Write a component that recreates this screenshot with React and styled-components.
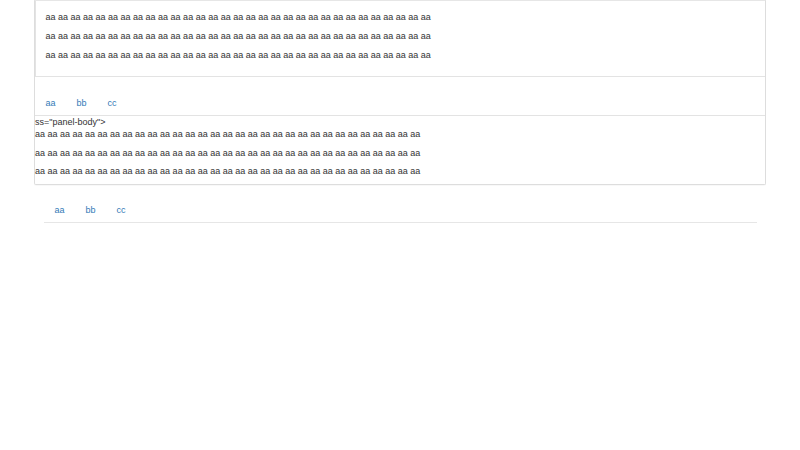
import styled, { createGlobalStyle } from "styled-components";

const GlobalStyle = createGlobalStyle`
  html, body {
    margin: 0;
    padding: 0;
    background: #fff;
  }
  body {
    font-family: "Liberation Sans", Arial, sans-serif;
    font-size: 9px;
    line-height: 12.7px;
    color: #333;
  }
`;

const Container = styled.div`
  padding: 0 34px;
`;

const Panel = styled.div`
  border: 1px solid #ddd;
  border-top-color: #e6e6e6;
  border-radius: 0 0 2px 2px;
  margin-bottom: 12.5px;
  box-shadow: 0 1px 1px rgba(0, 0, 0, 0.03);
`;

const PanelBody = styled.div`
  padding: 9.5px;
  border-left: 1px solid #e3e3e3;
  border-bottom: 1px solid #e3e3e3;
  height: 56px;
`;

const Text = styled.p`
  margin: 0 0 6.35px;
  white-space: nowrap;
`;

const Tabs = styled.ul`
  list-style: none;
  margin: ${(p) => (p.$inset ? "0 9px 0 10px" : "13px 0 0")};
  padding: 0;
  display: flex;
  border-bottom: 1px solid ${(p) => (p.$inset ? "#e6e6e6" : "#e3e3e3")};
`;

const Tab = styled.li`
  a {
    display: block;
    padding: 7.2px 10.5px 5.2px;
    color: #337ab7;
    text-decoration: none;
  }
`;

const RawBody = styled.div`
  padding: 0;
  line-height: 12px;

  p {
    margin-bottom: 6.5px;
  }
`;

const line = Array(31).fill("aa").join(" ");

function TabList({ inset }) {
  return (
    <Tabs $inset={inset}>
      {["aa", "bb", "cc"].map((t) => (
        <Tab key={t}>
          <a href="#">{t}</a>
        </Tab>
      ))}
    </Tabs>
  );
}

export default function App() {
  return (
    <>
      <GlobalStyle />
      <Container>
        <Panel>
          <PanelBody>
            <Text>{line}</Text>
            <Text>{line}</Text>
            <Text>{line}</Text>
          </PanelBody>
          <TabList />
          <RawBody>
            ss="panel-body"&gt;
            <Text>{line}</Text>
            <Text>{line}</Text>
            <Text>{line}</Text>
          </RawBody>
        </Panel>
        <TabList inset />
      </Container>
    </>
  );
}
